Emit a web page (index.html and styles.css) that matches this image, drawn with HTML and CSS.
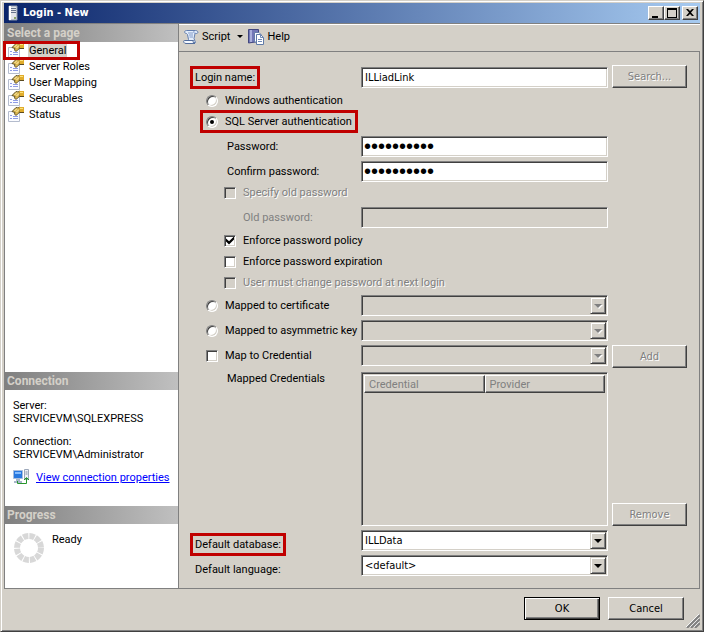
FILE: index.html
```html
<!DOCTYPE html>
<html lang="en">
<head>
<meta charset="utf-8">
<title>Login - New</title>
<link rel="stylesheet" href="styles.css">
</head>
<body>
<svg class="defs" aria-hidden="true">
  <defs>
    <symbol id="page-icon" viewBox="0 0 16 16">
      <path d="M.5 5.500h11v10H.5z" fill="#fbfcff" stroke="#b4bccd"/>
      <path d="M2 9.500h2M2 12.500h2M5 12.500h5M5 10.500h5" stroke="#8f9ce6"/>
      <path d="M4 5.500 8 1.500l2 .5 2-1v5L9.500 8 8 9.500 6.500 8 7 6.500z" fill="#dcb750" stroke="#5f5024"/>
      <path d="m6.500 5 2.500-2.500M8.500 6 11 3.500" stroke="#fff4b8"/>
      <path d="M11 1h5v5.500h-4z" fill="#e0ac2c"/>
      <path d="M12 2.500h3" stroke="#fbe27c"/>
      <path d="M12 6.500h4" stroke="#5b4a20"/>
    </symbol>
  </defs>
</svg>
<main class="window">
  <header class="titlebar">
    <svg class="title-icon" viewBox="0 0 10 16" aria-hidden="true">
      <path d="M1 1h8v14H1z" fill="#e2e5ea" stroke="#8995aa"/>
      <path d="M1 1h2v14H1z" fill="#fff"/>
      <path d="M3 3.500h5M3 5.500h5M3 7.500h5" stroke="#66738c"/>
      <path d="M6 12h2v2H6z" fill="#8ba56a"/>
    </svg>
    <h1>Login - New</h1>
    <div class="caption-buttons">
      <button aria-label="Minimize"><svg viewBox="0 0 12 10"><path d="M2 8h6v2H2z"/></svg></button>
      <button aria-label="Maximize"><svg viewBox="0 0 12 10"><path d="M1 0h10v10H1zM2 2v7h8V2z" fill-rule="evenodd"/></svg></button>
      <button class="close" aria-label="Close"><svg viewBox="0 0 12 10"><path d="M2 1h2l2 2 2-2h2L7 4.500 10 8H8L6 6 4 8H2l3-3.500z"/></svg></button>
    </div>
  </header>
  <div class="body">
    <aside class="sidebar">
      <h2>Select a page</h2>
      <nav class="pages">
        <a class="page current marked" href="#"><svg><use href="#page-icon"/></svg><span>General</span></a>
        <a class="page" href="#"><svg><use href="#page-icon"/></svg><span>Server Roles</span></a>
        <a class="page" href="#"><svg><use href="#page-icon"/></svg><span>User Mapping</span></a>
        <a class="page" href="#"><svg><use href="#page-icon"/></svg><span>Securables</span></a>
        <a class="page" href="#"><svg><use href="#page-icon"/></svg><span>Status</span></a>
      </nav>
      <h2>Connection</h2>
      <section class="connection">
        <p>Server:<br>SERVICEVM\SQLEXPRESS</p>
        <p>Connection:<br>SERVICEVM\Administrator</p>
        <a class="view-link" href="#">
          <svg viewBox="0 0 16 16" aria-hidden="true">
            <path d="M.5 1.500h9v8h-9z" fill="#2878df" stroke="#a8bcdc"/>
            <path d="M2 3h6v2H2z" fill="#83bbff"/>
            <path d="M3 10h4v2H3zM1 12h8v2H1z" fill="#a8b5ca"/>
            <path d="M11.500.500h4v10h-4z" fill="#eef1f6" stroke="#9da8ba"/>
            <path d="M12.500 3h2M12.500 5h2" stroke="#7f8ba0"/>
            <path d="M4.500 12v2.500h9V9M11 11l2.500-2.500L16 11" fill="none" stroke="#27962b"/>
          </svg>
          <span>View connection properties</span>
        </a>
      </section>
      <h2>Progress</h2>
      <section class="progress">
        <svg viewBox="0 0 30 30" aria-hidden="true"><circle cx="15" cy="15" r="12" fill="none" stroke="#d8d8d8" stroke-width="6" stroke-dasharray="5.283 1"/></svg>
        <span>Ready</span>
      </section>
    </aside>
    <div class="content">
      <div class="toolbar">
        <button><svg viewBox="0 0 16 16" aria-hidden="true">
          <path d="M3.500 1.500h9c3 0 3 3 1 3H12l-1 5 1.500 4H4l1.500-3-1-5-1-1C1 4.500 1 1.500 3.500 1.500z" fill="#e3edfb" stroke="#637eae"/>
          <path d="M1.500 11.500h9c-1 1 0 3 1.500 3H3c-2.500 0-3-3-1.500-3z" fill="#f5f9ff" stroke="#536d9c"/>
          <path d="M11 2c-1 2 1 3 2 2M5 4h5M6 6h4M6.500 8H10" fill="none" stroke="#829bc9"/>
        </svg>Script<span class="caret"></span></button>
        <button><svg viewBox="0 0 16 16" aria-hidden="true">
          <path d="M.5.500h10v12L.5 14z" fill="#7277b6" stroke="#42477f"/>
          <path d="M2 1h2v12H2z" fill="#a9aedb"/>
          <path d="M6.500 3.500H11L13.500 6v7h-7z" fill="#f8fbff" stroke="#667daa"/>
          <path d="M8.500 5.500h4l3 3v7h-7z" fill="#fff" stroke="#607ba8"/>
          <path d="M12.500 5.500v3h3M10 10.500h4M10 12.500h4" fill="none" stroke="#6f8ab8"/>
        </svg>Help</button>
      </div>
      <form class="form">
        <div class="row">
          <label class="lead" for="login"><span class="marked">Login name:</span></label>
          <input class="field" id="login" type="text" value="ILLiadLink">
          <button class="button up" type="button" disabled>Search...</button>
        </div>
        <div class="group tight">
          <label class="choice"><input type="radio" name="auth"><span>Windows authentication</span></label>
          <label class="choice marked"><input type="radio" name="auth" checked><span>SQL Server authentication</span></label>
        </div>
        <div class="row">
          <label class="second" for="pw">Password:</label>
          <input class="field" id="pw" type="password" value="abcdefghij">
        </div>
        <div class="row">
          <label class="second" for="pw2">Confirm password:</label>
          <input class="field" id="pw2" type="password" value="abcdefghij">
        </div>
        <div class="group flush">
          <label class="choice nested off"><input type="checkbox" disabled><span>Specify old password</span></label>
        </div>
        <div class="row">
          <label class="third off" for="old">Old password:</label>
          <input class="field" id="old" type="password" disabled>
        </div>
        <div class="group tight">
          <label class="choice nested"><input type="checkbox" checked><span>Enforce password policy</span></label>
          <label class="choice nested"><input type="checkbox"><span>Enforce password expiration</span></label>
          <label class="choice nested off"><input type="checkbox" disabled><span>User must change password at next login</span></label>
        </div>
        <div class="row near">
          <label class="choice"><input type="radio" name="auth"><span>Mapped to certificate</span></label>
          <div class="combo"><select class="field" aria-label="Certificate" disabled></select><span class="drop"></span></div>
        </div>
        <div class="row">
          <label class="choice"><input type="radio" name="auth"><span>Mapped to asymmetric key</span></label>
          <div class="combo"><select class="field" aria-label="Asymmetric key" disabled></select><span class="drop"></span></div>
        </div>
        <div class="row">
          <label class="choice"><input type="checkbox"><span>Map to Credential</span></label>
          <div class="combo"><select class="field" aria-label="Credential" disabled></select><span class="drop"></span></div>
          <button class="button down" type="button" disabled>Add</button>
        </div>
        <div class="row tall">
          <span class="second" id="mapped">Mapped Credentials</span>
          <div class="list">
            <table aria-labelledby="mapped"><thead><tr><th>Credential</th><th>Provider</th></tr></thead><tbody></tbody></table>
          </div>
          <button class="button up" type="button" disabled>Remove</button>
        </div>
        <div class="row low">
          <label class="lead" for="db"><span class="marked">Default database:</span></label>
          <div class="combo"><select class="field" id="db"><option>ILLData</option></select><span class="drop"></span></div>
        </div>
        <div class="row low">
          <label class="lead" for="lang">Default language:</label>
          <div class="combo"><select class="field" id="lang"><option>&lt;default&gt;</option></select><span class="drop"></span></div>
        </div>
      </form>
    </div>
  </div>
  <footer class="footer">
    <button class="button default">OK</button>
    <button class="button">Cancel</button>
    <svg class="grip" viewBox="0 0 14 14" aria-hidden="true">
      <path d="M0 13 13 0M4 13l9-9M8 13l5-5" stroke="#fff"/>
      <path d="M1 14 14 1M5 14l9-9M9 14l5-5" stroke="#808080" stroke-width="2"/>
    </svg>
  </footer>
</main>
</body>
</html>
```
FILE: styles.css
```css
:root {
  --face: #d4d0c8;
  --shade: #808080;
  --dark: #404040;
  --mark: #c00000;
  --ui: Roboto, "Liberation Sans", Arial, sans-serif;
  --tahoma: "DejaVu Sans Condensed", "DejaVu Sans", sans-serif;
}

* { box-sizing: border-box; }

body {
  margin: 0;
  background: var(--face);
  color: #000;
  font: 11px/13px var(--ui);
}

h1, h2, p { margin: 0; }

button, input, select {
  margin: 0;
  color: inherit;
  font: inherit;
}

.defs { position: absolute; width: 0; height: 0; }

.window {
  display: flex;
  flex-direction: column;
  min-height: 100vh;
  padding: 2px 3px 1px 2px;
  border: 1px solid;
  border-color: var(--face) var(--dark) var(--dark) var(--face);
  box-shadow: inset 1px 1px #fff, inset -1px -1px var(--shade);
}

/* Title bar */
.titlebar {
  display: flex;
  align-items: center;
  gap: 5px;
  height: 20px;
  margin-left: 1px;
  padding: 0 2px 0 4px;
  background: linear-gradient(to right, #0a246a, #a6caf0);
  color: #fff;
}
.title-icon { width: 10px; height: 16px; }
.titlebar h1 {
  flex: 1;
  font: bold 11px/16px var(--tahoma);
}
.caption-buttons { display: flex; }
.caption-buttons button {
  display: flex;
  width: 16px;
  height: 14px;
  padding: 1px;
  border: 1px solid;
  border-color: #fff var(--dark) var(--dark) #fff;
  background: var(--face);
  box-shadow: inset -1px -1px var(--shade);
}
.caption-buttons .close { margin-left: 2px; }
.caption-buttons svg { width: 12px; height: 10px; }

/* Main area */
.body {
  display: grid;
  grid-template-columns: 174px 1fr;
  flex: 1;
  margin-left: 1px;
}
.sidebar {
  display: flex;
  flex-direction: column;
  border: solid var(--shade);
  border-width: 1px 0 1px 1px;
  background: #fff;
}
.sidebar h2 {
  height: 18px;
  padding-left: 2px;
  background: linear-gradient(to right, #808080, #c0c0c0);
  color: var(--face);
  font: bold 12px/18px var(--ui);
}
.pages { flex: 1; }
.page {
  display: flex;
  align-items: center;
  gap: 4px;
  height: 16px;
  padding-left: 3px;
  color: #000;
  text-decoration: none;
}
.page svg { width: 16px; height: 16px; }
.page span { padding: 0 1px; }
.page.current span { background: var(--face); }
.marked { position: relative; }
.marked::after {
  position: absolute;
  inset: -5px;
  border: 3px solid var(--mark);
  content: "";
  pointer-events: none;
}
.page.marked::after { inset: -1px 98px -2px -2px; }
.connection {
  display: flex;
  flex-direction: column;
  gap: 10px;
  height: 116px;
  padding: 9px 8px;
}
.view-link {
  display: flex;
  align-items: center;
  gap: 7px;
  height: 12px;
  color: #00f;
}
.view-link svg { flex: none; width: 16px; height: 16px; }
.progress {
  display: flex;
  gap: 8px;
  height: 64px;
  padding: 9px;
}
.progress svg { width: 30px; height: 30px; }

/* Toolbar */
.content {
  display: flex;
  flex-direction: column;
  border-left: 1px solid var(--shade);
}
.toolbar {
  display: flex;
  align-items: center;
  gap: 5px;
  height: 28px;
  padding: 0 0 2px 4px;
  border-top: 1px solid var(--shade);
  box-shadow: inset 0 1px #fff;
}
.toolbar button {
  display: flex;
  align-items: center;
  gap: 3px;
  padding: 0;
  border: 0;
  background: none;
}
.toolbar svg { width: 16px; height: 16px; }
.caret {
  margin-left: 4px;
  border: solid transparent;
  border-width: 3px 3px 0;
  border-top-color: #000;
}

/* Form */
.form {
  flex: 1;
  padding: 15px 12px 11px 0;
  border: solid var(--shade);
  border-width: 1px 1px 1px 0;
}
.row {
  display: grid;
  grid-template-columns: 178px 1fr 75px;
  align-items: center;
  column-gap: 4px;
  min-height: 21px;
  margin-top: 4px;
}
.row:first-child, .flush { margin-top: 0; }
.tight, .near { margin-top: 2px; }
.row.tall {
  align-items: start;
  height: 154px;
  margin-top: 6px;
}
.lead { padding-left: 16px; }
.second { padding-left: 48px; }
.third { padding-left: 64px; }
.low .lead { padding-top: 8px; }
.off { color: var(--shade); }
.choice {
  display: flex;
  align-items: center;
  gap: 7px;
  width: fit-content;
  height: 21px;
  margin-left: 27px;
  white-space: nowrap;
}
.nested { margin-left: 45px; }
.choice.off { text-shadow: 1px 1px #fff; }
.choice.marked::after { inset: -1px -6px; }

.choice input {
  display: grid;
  place-items: center;
  width: 12px;
  height: 12px;
  border: 1px solid;
  border-color: var(--shade) #fff #fff var(--shade);
  background: #fff;
  box-shadow: inset 1px 1px var(--dark), inset -1px -1px var(--face);
  appearance: none;
}
.choice input[type="radio"] { border-radius: 50%; }
.choice input:disabled { background: var(--face); }
.choice input:checked::before {
  width: 8px;
  height: 8px;
  background: #000;
  clip-path: polygon(0 25%, 38% 60%, 100% 0, 100% 38%, 38% 100%, 0 62%);
  content: "";
}
.choice input[type="radio"]:checked::before {
  width: 4px;
  height: 4px;
  border-radius: 50%;
  clip-path: none;
}

.field {
  width: 100%;
  height: 21px;
  padding: 0 3px;
  border: 1px solid;
  border-color: var(--shade) #fff #fff var(--shade);
  border-radius: 0;
  outline: 0;
  background: #fff;
  box-shadow: inset 1px 1px var(--dark), inset -1px -1px var(--face);
  font: 11px/16px var(--tahoma);
  appearance: none;
}
.field[type="password"] { padding: 0 2px; font: 20px/16px "Liberation Sans", Arial, sans-serif; }
.field:disabled { background: var(--face); opacity: 1; }

.combo { position: relative; }
.combo .field { display: block; }
.drop {
  position: absolute;
  top: 2px;
  right: 2px;
  display: grid;
  place-items: center;
  width: 16px;
  height: 17px;
  border: 1px solid;
  border-color: var(--face) var(--dark) var(--dark) var(--face);
  background: var(--face);
  box-shadow: inset 1px 1px #fff, inset -1px -1px var(--shade);
  pointer-events: none;
}
.drop::before {
  border: solid transparent;
  border-width: 4px 4px 0;
  border-top-color: #000;
  content: "";
}
.field:disabled + .drop::before {
  border-top-color: var(--shade);
  filter: drop-shadow(1px 1px #fff);
}

.list {
  height: 100%;
  padding: 2px;
  border: 1px solid;
  border-color: var(--shade) #fff #fff var(--shade);
  box-shadow: inset 1px 1px var(--dark);
}
.list table {
  width: 100%;
  border-collapse: separate;
  border-spacing: 0;
  table-layout: fixed;
}
.list th {
  height: 18px;
  padding: 0 4px;
  border: 1px solid;
  border-color: #fff var(--dark) var(--dark) #fff;
  box-shadow: inset -1px -1px var(--shade);
  color: var(--shade);
  font: 11px/13px var(--ui);
  text-align: left;
}

.button {
  height: 23px;
  padding: 0;
  border: 1px solid;
  border-color: #fff var(--dark) var(--dark) #fff;
  background: var(--face);
  box-shadow: inset -1px -1px var(--shade);
  font: 11px/16px var(--tahoma);
}
.button:disabled { color: var(--shade); text-shadow: 1px 1px #fff; }
.up { align-self: end; margin-top: -2px; }
.down { align-self: start; margin-bottom: -2px; }

/* Footer */
.footer {
  position: relative;
  display: flex;
  justify-content: flex-end;
  gap: 8px;
  padding: 8px 16px 10px;
}
.footer .button { width: 76px; }
.footer .default {
  border-color: #000;
  box-shadow: inset 1px 1px #fff, inset -1px -1px var(--dark), inset -2px -2px var(--shade);
}
.grip {
  position: absolute;
  right: 0;
  bottom: 2px;
  width: 14px;
  height: 14px;
}
```
